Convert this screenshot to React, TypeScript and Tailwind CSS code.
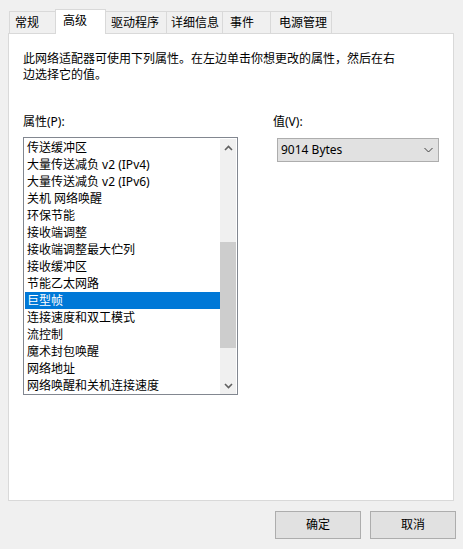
import React from "react";

const font = { fontFamily: '"Noto Sans", "Noto Sans CJK SC", sans-serif' };

const tabs = [
  { label: "常规", w: "w-[47px]", pl: "pl-[5px]" },
  { label: "高级", w: "w-[51px]", pl: "pl-[7px]", active: true },
  { label: "驱动程序", w: "w-[62px]", pl: "pl-[5px]" },
  { label: "详细信息", w: "w-[57px]", pl: "pl-[4px]" },
  { label: "事件", w: "w-[49px]", pl: "pl-[7px]" },
  { label: "电源管理", w: "w-[62px]", pl: "pl-[8px]" },
];

const properties = [
  "传送缓冲区",
  "大量传送减负 v2 (IPv4)",
  "大量传送减负 v2 (IPv6)",
  "关机 网络唤醒",
  "环保节能",
  "接收端调整",
  "接收端调整最大伫列",
  "接收缓冲区",
  "节能乙太网路",
  "巨型帧",
  "连接速度和双工模式",
  "流控制",
  "魔术封包唤醒",
  "网络地址",
  "网络唤醒和关机连接速度",
];

function Chevron({ up }: { up?: boolean }) {
  return (
    <svg width="9" height="6" viewBox="0 0 9 6">
      <polyline
        points={up ? "1,5 4.5,1.5 8,5" : "1,1 4.5,4.5 8,1"}
        fill="none"
        stroke="#606060"
        strokeWidth="1.6"
      />
    </svg>
  );
}

function Tab({ label, w, pl, active }: { label: string; w: string; pl: string; active?: boolean }) {
  if (active) {
    return (
      <div className={`relative z-10 -ml-px -mb-px h-[25px] ${w} ${pl} border border-b-0 border-[#d9d9d9] bg-white pt-[3px] text-[12px] leading-[16px]`}>
        {label}
      </div>
    );
  }
  return (
    <div className={`-ml-px first:ml-0 h-[22px] ${w} ${pl} border border-b-0 border-[#d9d9d9] bg-[#f0f0f0] pt-[3px] text-[12px] leading-[16px]`}>
      {label}
    </div>
  );
}

export default function App() {
  const selected = "巨型帧";

  return (
    <div className="w-[463px] h-[549px] overflow-hidden bg-[#f0f0f0] text-black" style={font}>
      {/* Tab strip */}
      <div className="flex items-end h-[33px] pt-[9px] pl-[9px]">
        {tabs.map((t) => (
          <Tab key={t.label} {...t} />
        ))}
      </div>

      {/* Panel */}
      <div className="ml-[8px] w-[446px] h-[468px] border border-[#d9d9d9] bg-white px-[14px]">
        <p className="pt-[17px] w-[378px] text-[12px] leading-[16px]">
          此网络适配器可使用下列属性。在左边单击你想更改的属性，然后在右边选择它的值。
        </p>

        <div className="flex mt-[31px]">
          <div className="w-[217px]">
            <div className="text-[12px] leading-[16px]">属性(P):</div>
            <div className="mt-[7px] h-[258px] border border-[#828790] px-px pt-px flex">
              <div className="flex-1 overflow-hidden">
                {properties.map((p) => (
                  <div
                    key={p}
                    className={`h-[17px] pl-[2px] text-[12px] leading-[17px] whitespace-nowrap ${
                      p === selected ? "bg-[#0078d7] text-white" : ""
                    }`}
                  >
                    {p}
                  </div>
                ))}
              </div>
              {/* Scrollbar */}
              <div className="w-[16px] h-[255px] bg-[#f0f0f0] flex flex-col">
                <div className="h-[17px] flex items-center justify-center">
                  <Chevron up />
                </div>
                <div className="h-[86px]" />
                <div className="h-[106px] bg-[#cdcdcd]" />
                <div className="flex-1" />
                <div className="h-[17px] flex items-center justify-center">
                  <Chevron />
                </div>
              </div>
            </div>
          </div>

          <div className="ml-[35px]">
            <div className="text-[12px] leading-[16px]">值(V):</div>
            <div className="ml-[4px] mt-[8px] w-[162px] h-[24px] border border-[#adadad] bg-[#e1e1e1] flex items-center justify-between pl-[3px] pr-[5px]">
              <span className="text-[12px] leading-[16px]">9014 Bytes</span>
              <svg width="9" height="6" viewBox="0 0 9 6">
                <polyline points="0.5,1 4.5,5 8.5,1" fill="none" stroke="#404040" strokeWidth="1" />
              </svg>
            </div>
          </div>
        </div>
      </div>

      {/* Buttons */}
      <div className="flex justify-end gap-[9px] mt-[10px] pr-[7px]">
        <button className="w-[86px] h-[28px] border border-[#adadad] bg-[#e1e1e1] text-[12px] leading-[16px]">
          确定
        </button>
        <button className="w-[86px] h-[28px] border border-[#adadad] bg-[#e1e1e1] text-[12px] leading-[16px]">
          取消
        </button>
      </div>
    </div>
  );
}
